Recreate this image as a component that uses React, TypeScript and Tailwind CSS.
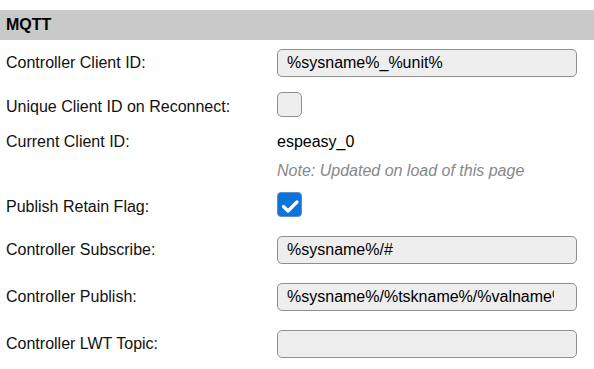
const font = { fontFamily: "'Liberation Sans', Arial, sans-serif" };

function TextInput({ value }: { value: string }) {
  return (
    <div className="flex items-center h-[28px] w-[300px] rounded-[5px] border border-[#8f8f8f] bg-[#eeeeee] pl-[9px] text-[16px] text-black">
      <div className="w-[267px] overflow-hidden whitespace-nowrap">{value}</div>
    </div>
  );
}

function Checkbox({ checked }: { checked?: boolean }) {
  if (checked) {
    return (
      <div className="mb-[5px] grid place-items-center h-[25px] w-[25px] rounded-[4px] border border-[#5a8fd0] bg-[#0a74da]">
        <svg width="25" height="25" viewBox="0 0 25 25" fill="none">
          <polyline points="5.5,13.5 10,18 19,9" stroke="white" strokeWidth="3.2" strokeLinecap="round" strokeLinejoin="round" />
        </svg>
      </div>
    );
  }
  return <div className="mb-[5px] h-[25px] w-[25px] rounded-[5px] border border-[#8f8f8f] bg-[#eeeeee]" />;
}

function Row({ label, h, children }: { label?: string; h: string; children: React.ReactNode }) {
  return (
    <div className={`flex items-center ${h}`}>
      <div className="w-[277px] pl-[6px] text-[16px] text-[#111]">{label}</div>
      <div className="flex items-center">{children}</div>
    </div>
  );
}

export default function App() {
  return (
    <div className="w-[594px] h-[369px] bg-white pt-[10px] overflow-hidden" style={font}>
      <div className="flex items-center h-[30px] bg-[#c9c9c9] pl-[6px] text-[16px] font-bold text-black">MQTT</div>

      <Row label="Controller Client ID:" h="h-[46px]">
        <TextInput value="%sysname%_%unit%" />
      </Row>
      <Row label="Unique Client ID on Reconnect:" h="h-[42px]">
        <Checkbox />
      </Row>
      <Row label="Current Client ID:" h="h-[28px]">
        <span className="text-[16px] text-black">espeasy_0</span>
      </Row>
      <Row h="h-[30px]">
        <span className="text-[16px] italic text-[#888]">Note: Updated on load of this page</span>
      </Row>
      <Row label="Publish Retain Flag:" h="h-[41px]">
        <Checkbox checked />
      </Row>
      <Row label="Controller Subscribe:" h="h-[46px]">
        <TextInput value="%sysname%/#" />
      </Row>
      <Row label="Controller Publish:" h="h-[47px]">
        <TextInput value="%sysname%/%tskname%/%valname%" />
      </Row>
      <Row label="Controller LWT Topic:" h="h-[47px]">
        <TextInput value="" />
      </Row>
    </div>
  );
}
